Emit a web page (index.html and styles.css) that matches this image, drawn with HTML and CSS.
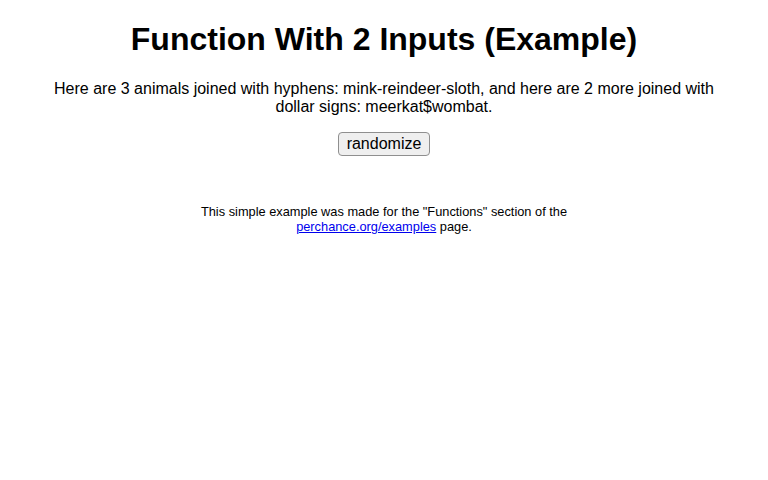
FILE: index.html
```html
<!DOCTYPE html>
<html>
<head>
<meta charset="utf-8">
<link rel="stylesheet" href="styles.css">
</head>
<body>
<h1 class="title">Function With 2 Inputs (Example)</h1>
<p class="output">Here are 3 animals joined with hyphens: mink-reindeer-sloth, and here are 2 more joined with dollar signs: meerkat$wombat.</p>
<button class="btn">randomize</button>
<p class="note">This simple example was made for the "Functions" section of the<br><a href="#">perchance.org/examples</a> page.</p>
</body>
</html>
```
FILE: styles.css
```css
html, body {
  margin: 0;
  background: #fff;
  color: #000;
  font-family: "Liberation Sans", Arial, sans-serif;
  text-align: center;
}
body {
  padding: 8px;
}
.title {
  font-size: 32px;
  font-weight: bold;
  margin: 13px 0 0;
  line-height: 37px;
}
.output {
  font-size: 16px;
  line-height: 18px;
  margin: 22px 40px 0;
}
.btn {
  margin-top: 16px;
  font-family: "Liberation Sans", sans-serif;
  font-size: 16px;
  line-height: 18px;
  padding: 2px 8px;
  background: #efefef;
  border: 1px solid #8f8f8f;
  border-radius: 4px;
  color: #000;
}
.note {
  font-size: 12.8px;
  line-height: 15px;
  margin: 48px 0 0;
}
.note a {
  color: #0000ee;
}
```
